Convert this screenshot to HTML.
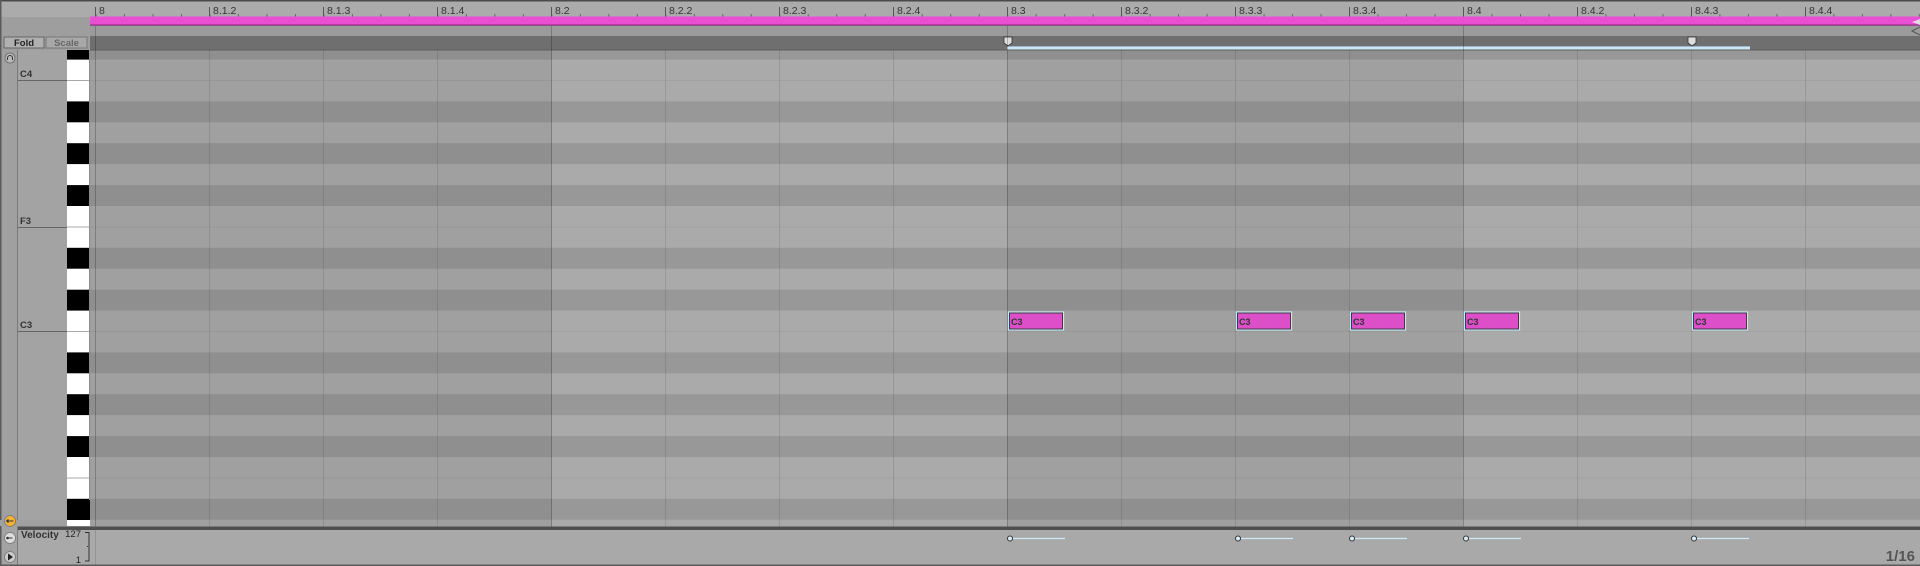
<!DOCTYPE html>
<html><head><meta charset="utf-8"><style>
html,body{margin:0;padding:0;background:#a0a0a0;}
svg{display:block;font-family:"Liberation Sans",sans-serif;}
</style></head><body>
<svg width="1920" height="566" viewBox="0 0 1920 566" xmlns="http://www.w3.org/2000/svg">
<defs>
<pattern id="tk" x="95.5" y="0" width="28.49" height="20" patternUnits="userSpaceOnUse"><rect x="0" y="14" width="1" height="3" fill="#666"/></pattern>
</defs>
<!-- base -->
<rect x="0" y="0" width="1920" height="566" fill="#a3a3a3"/>
<!-- ruler -->
<rect x="0" y="0" width="1920" height="17" fill="#ababab"/>
<rect x="0" y="0" width="1920" height="1.5" fill="#4a4a4a"/>
<rect x="90" y="0" width="1830" height="17" fill="url(#tk)"/>
<g fill="#555">
<rect x="95" y="7" width="1" height="10"/><rect x="209" y="7" width="1" height="10"/><rect x="323" y="7" width="1" height="10"/><rect x="437" y="7" width="1" height="10"/>
<rect x="551" y="7" width="1" height="10"/><rect x="665" y="7" width="1" height="10"/><rect x="779" y="7" width="1" height="10"/><rect x="893" y="7" width="1" height="10"/>
<rect x="1007" y="7" width="1" height="10"/><rect x="1121" y="7" width="1" height="10"/><rect x="1235" y="7" width="1" height="10"/><rect x="1349" y="7" width="1" height="10"/>
<rect x="1463" y="7" width="1" height="10"/><rect x="1577" y="7" width="1" height="10"/><rect x="1691" y="7" width="1" height="10"/><rect x="1805" y="7" width="1" height="10"/>
</g>
<g font-size="10.5" fill="#333">
<text x="99" y="14">8</text><text x="213" y="14">8.1.2</text><text x="327" y="14">8.1.3</text><text x="441" y="14">8.1.4</text>
<text x="555" y="14">8.2</text><text x="669" y="14">8.2.2</text><text x="783" y="14">8.2.3</text><text x="897" y="14">8.2.4</text>
<text x="1011" y="14">8.3</text><text x="1125" y="14">8.3.2</text><text x="1239" y="14">8.3.3</text><text x="1353" y="14">8.3.4</text>
<text x="1467" y="14">8.4</text><text x="1581" y="14">8.4.2</text><text x="1695" y="14">8.4.3</text><text x="1809" y="14">8.4.4</text>
</g>
<!-- left top area -->
<rect x="0" y="17" width="90" height="33" fill="#9e9e9e"/>
<rect x="4" y="37" width="40" height="11" fill="#b0b0b0" stroke="#666" stroke-width="1"/>
<text x="24" y="46" font-size="9.5" fill="#222" text-anchor="middle" font-weight="bold">Fold</text>
<rect x="46" y="37" width="41" height="11" fill="#a8a8a8" stroke="#777" stroke-width="1"/>
<text x="66.5" y="46" font-size="9.5" fill="#666" text-anchor="middle" font-weight="bold">Scale</text>
<!-- pink bar -->
<rect x="90" y="16.5" width="1830" height="9" fill="#e84fd3"/>
<rect x="90" y="24.5" width="1830" height="1.2" fill="#8a2a7a"/>
<rect x="90" y="26" width="1830" height="10" fill="#9b9b9b"/>
<rect x="90" y="36" width="1830" height="14" fill="#6f6f6f"/>
<rect x="90" y="49.5" width="1830" height="1" fill="#5e5e5e"/>
<path d="M1920 19 L1912 22 L1920 25 Z" fill="#ddd"/>
<path d="M1920 27 L1912 31 L1920 35" fill="none" stroke="#555" stroke-width="1"/>
<!-- loop brace -->
<rect x="1007" y="46.5" width="743" height="3" fill="#c8e6f8"/>
<rect x="1007" y="46" width="743" height="0.8" fill="#9ab"/>
<path d="M1004 37 h8 v6 l-4 3 l-4 -3 Z" fill="#ddd" stroke="#333" stroke-width="0.8"/>
<path d="M1688 37 h8 v6 l-4 3 l-4 -3 Z" fill="#ddd" stroke="#333" stroke-width="0.8"/>
<!-- grid sections -->
<rect x="90" y="50.5" width="462" height="476" fill="#a0a0a0"/>
<rect x="552" y="50.5" width="455" height="476" fill="#aaaaaa"/>
<rect x="1007" y="50.5" width="456" height="476" fill="#a0a0a0"/>
<rect x="1463" y="50.5" width="457" height="476" fill="#aaaaaa"/>
<!-- black rows -->
<g fill="rgba(0,0,0,0.106)">
<rect x="90" y="50.5" width="1830" height="9.1"/>
<rect x="90" y="101.4" width="1830" height="20.9"/>
<rect x="90" y="143.2" width="1830" height="20.9"/>
<rect x="90" y="185.1" width="1830" height="20.9"/>
<rect x="90" y="247.8" width="1830" height="20.9"/>
<rect x="90" y="289.7" width="1830" height="20.9"/>
<rect x="90" y="352.4" width="1830" height="20.9"/>
<rect x="90" y="394.2" width="1830" height="20.9"/>
<rect x="90" y="436.1" width="1830" height="20.9"/>
<rect x="90" y="498.8" width="1830" height="20.9"/>
</g>
<g fill="rgba(0,0,0,0.05)">
<rect x="90" y="80" width="1830" height="1"/><rect x="90" y="226.5" width="1830" height="1"/><rect x="90" y="330.8" width="1830" height="1"/><rect x="90" y="477.5" width="1830" height="1"/>
</g>
<!-- vertical lines -->
<g fill="rgba(0,0,0,0.1)">
<rect x="209" y="50" width="1" height="477"/><rect x="323" y="50" width="1" height="477"/><rect x="437" y="50" width="1" height="477"/>
<rect x="665" y="50" width="1" height="477"/><rect x="779" y="50" width="1" height="477"/><rect x="893" y="50" width="1" height="477"/>
<rect x="1121" y="50" width="1" height="477"/><rect x="1235" y="50" width="1" height="477"/><rect x="1349" y="50" width="1" height="477"/>
<rect x="1577" y="50" width="1" height="477"/><rect x="1691" y="50" width="1" height="477"/><rect x="1805" y="50" width="1" height="477"/>
</g>
<g fill="rgba(0,0,0,0.22)">
<rect x="95" y="26" width="1" height="540"/><rect x="551" y="26" width="1" height="540"/><rect x="1007" y="26" width="1" height="540"/><rect x="1463" y="26" width="1" height="540"/>
</g>
<!-- left column -->
<rect x="0" y="50" width="17" height="476" fill="#a0a0a0"/>
<rect x="17" y="50" width="1" height="516" fill="#7a7a7a"/>
<rect x="18" y="50" width="49" height="476" fill="#a3a3a3"/>
<rect x="0" y="0" width="1.5" height="566" fill="#5a5a5a"/>
<circle cx="10" cy="58" r="5" fill="#bbb" stroke="#666" stroke-width="0.8"/>
<path d="M7.5 60 v-2 a2.5 2.5 0 0 1 5 0 v2" fill="none" stroke="#333" stroke-width="1"/>
<g font-size="9.5" font-weight="bold" fill="#333">
<text x="20" y="77">C4</text><text x="20" y="224">F3</text><text x="20" y="328">C3</text>
</g>
<g fill="#666"><rect x="18" y="80" width="49" height="1"/><rect x="18" y="227" width="49" height="1"/><rect x="18" y="331" width="49" height="1"/></g>
<!-- piano -->
<rect x="67" y="50" width="23" height="476" fill="#fff"/>
<g fill="#000">
<rect x="67" y="50" width="23" height="9.6"/>
<rect x="67" y="101.4" width="23" height="20.9"/>
<rect x="67" y="143.2" width="23" height="20.9"/>
<rect x="67" y="185.1" width="23" height="20.9"/>
<rect x="67" y="247.8" width="23" height="20.9"/>
<rect x="67" y="289.7" width="23" height="20.9"/>
<rect x="67" y="352.4" width="23" height="20.9"/>
<rect x="67" y="394.2" width="23" height="20.9"/>
<rect x="67" y="436.1" width="23" height="20.9"/>
<rect x="67" y="498.8" width="23" height="20.9"/>
</g>
<g fill="#aaa"><rect x="67" y="80" width="23" height="1"/><rect x="67" y="226.5" width="23" height="1"/><rect x="67" y="331" width="23" height="1"/><rect x="67" y="477.5" width="23" height="1"/></g>
<rect x="89" y="50" width="1" height="476" fill="#8a8a8a"/>
<!-- notes -->
<g font-size="9" font-weight="bold" fill="#333">
<rect x="1008.5" y="312" width="55" height="18" fill="#dd4fc9" stroke="#c4e8f7" stroke-width="1.2"/><rect x="1009.5" y="313" width="53" height="16" fill="none" stroke="#333" stroke-width="0.9"/><text x="1011" y="325">C3</text>
<rect x="1236.5" y="312" width="55" height="18" fill="#dd4fc9" stroke="#c4e8f7" stroke-width="1.2"/><rect x="1237.5" y="313" width="53" height="16" fill="none" stroke="#333" stroke-width="0.9"/><text x="1239" y="325">C3</text>
<rect x="1350.5" y="312" width="55" height="18" fill="#dd4fc9" stroke="#c4e8f7" stroke-width="1.2"/><rect x="1351.5" y="313" width="53" height="16" fill="none" stroke="#333" stroke-width="0.9"/><text x="1353" y="325">C3</text>
<rect x="1464.5" y="312" width="55" height="18" fill="#dd4fc9" stroke="#c4e8f7" stroke-width="1.2"/><rect x="1465.5" y="313" width="53" height="16" fill="none" stroke="#333" stroke-width="0.9"/><text x="1467" y="325">C3</text>
<rect x="1692.5" y="312" width="55" height="18" fill="#dd4fc9" stroke="#c4e8f7" stroke-width="1.2"/><rect x="1693.5" y="313" width="53" height="16" fill="none" stroke="#333" stroke-width="0.9"/><text x="1695" y="325">C3</text>
</g>
<!-- separator -->
<rect x="0" y="520" width="90" height="6" fill="#a0a0a0"/>
<rect x="67" y="500" width="23" height="20" fill="#000"/>
<rect x="67" y="520" width="23" height="6" fill="#fff"/>
<rect x="18" y="526.5" width="1902" height="3.5" fill="#4f4f4f"/>
<!-- velocity lane -->
<rect x="18" y="530" width="1902" height="35" fill="#a9a9a9"/>
<rect x="95" y="530" width="1" height="35" fill="rgba(0,0,0,0.12)"/>
<rect x="0" y="564.5" width="1920" height="1.5" fill="#5a5a5a"/>
<circle cx="10" cy="521" r="5.5" fill="#f5b335" stroke="#777" stroke-width="0.8"/>
<path d="M6.5 521 h7 M6.5 521 l2 -1.5 M6.5 521 l2 1.5" stroke="#333" stroke-width="1.1" fill="none"/>
<circle cx="10" cy="538" r="5.5" fill="#ddd" stroke="#777" stroke-width="0.8"/>
<path d="M6.5 538 h6" stroke="#333" stroke-width="1"/><circle cx="7.5" cy="538" r="1.3" fill="#333"/>
<circle cx="10" cy="557" r="5.5" fill="#ccc" stroke="#777" stroke-width="0.8"/>
<path d="M8 553.5 L13 557 L8 560.5 Z" fill="#222"/>
<text x="21" y="538" font-size="10" font-weight="bold" fill="#333">Velocity</text>
<text x="81" y="537" font-size="9.5" fill="#222" text-anchor="end">127</text>
<text x="81" y="563" font-size="9.5" fill="#222" text-anchor="end">1</text>
<path d="M85 532.5 h4 v28.5 h-4" fill="none" stroke="#333" stroke-width="1"/>
<rect x="87" y="546" width="1" height="1" fill="#333"/>
<g stroke="#cfe9f8" stroke-width="1.2">
<line x1="1013" y1="538.5" x2="1065" y2="538.5"/><line x1="1241" y1="538.5" x2="1293" y2="538.5"/><line x1="1355" y1="538.5" x2="1407" y2="538.5"/><line x1="1469" y1="538.5" x2="1521" y2="538.5"/><line x1="1697" y1="538.5" x2="1749" y2="538.5"/>
</g>
<g fill="#d8eefa" stroke="#333" stroke-width="1">
<circle cx="1010" cy="538.5" r="2.5"/><circle cx="1238" cy="538.5" r="2.5"/><circle cx="1352" cy="538.5" r="2.5"/><circle cx="1466" cy="538.5" r="2.5"/><circle cx="1694" cy="538.5" r="2.5"/>
</g>
<text x="1915" y="561" font-size="15" font-weight="bold" fill="#555" text-anchor="end">1/16</text>
</svg>
</body></html>
